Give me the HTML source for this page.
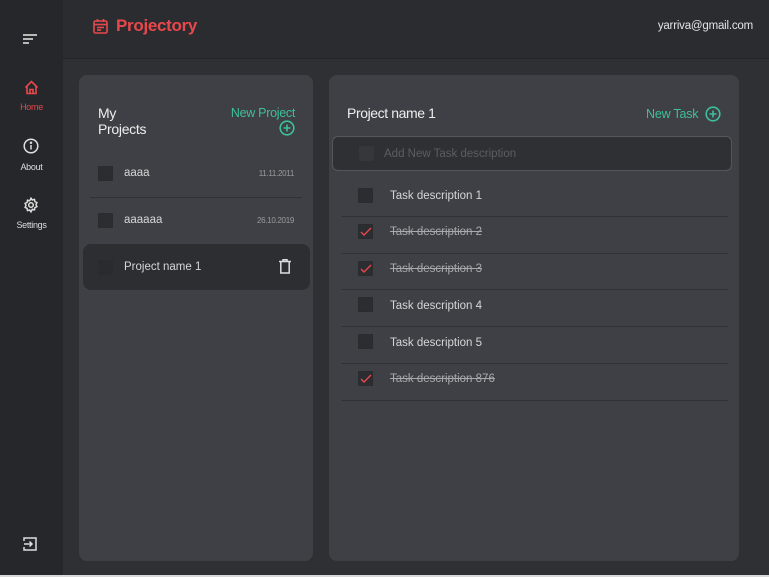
<!DOCTYPE html>
<html><head><style>
*{box-sizing:border-box;margin:0;padding:0}
body{width:769px;height:577px;background:#2f3034;font-family:"Liberation Sans",sans-serif;position:relative;overflow:hidden;color:#e4e4e6}
.side{position:absolute;left:0;top:0;width:63px;height:575px;background:#26272b}
.hdr{position:absolute;left:63px;top:0;right:0;height:59px;background:#2b2c30;border-bottom:1px solid #242529}
.card{position:absolute;background:#3f4045;border-radius:8px}
.nav{position:absolute;width:63px;text-align:center;font-size:9px;color:#ddd;letter-spacing:-.3px}
.cb{position:absolute;width:15px;height:15px;background:#2c2d31;border:1px solid #2a2b2e;border-radius:1px}
.t{position:absolute;font-size:11.5px;color:#d6d6d8}
.s{text-decoration:line-through;color:#a9a9ad}
.line{position:absolute;height:1px;background:#313236}
</style></head><body>
<div class="side"></div>
<div style="position:absolute;left:0;top:575px;width:769px;height:2px;background:#d8d8d8"></div>
<svg style="position:absolute;left:23px;top:34px" width="15" height="11"><g stroke="#ddd" stroke-width="1.6"><line x1="0" y1="1" x2="14" y2="1"/><line x1="0" y1="5" x2="10" y2="5"/><line x1="0" y1="9" x2="6" y2="9"/></g></svg>
<svg style="position:absolute;left:24px;top:80px" width="15" height="15" fill="none" stroke="#e8484c" stroke-width="1.6"><path d="M1.5 7.5L7.5 1.5L13.5 7.5M3 6v7.5h9V6M6 13.5V9.5h3v4"/></svg>
<div class="nav" style="top:102px;color:#e0484c">Home</div>
<svg style="position:absolute;left:23px;top:138px" width="16" height="16" fill="none" stroke="#ddd" stroke-width="1.5"><circle cx="8" cy="8" r="6.8"/><line x1="8" y1="7" x2="8" y2="11.5"/><circle cx="8" cy="4.8" r=".5" fill="#ddd"/></svg>
<div class="nav" style="top:162px">About</div>
<svg style="position:absolute;left:23px;top:197px" width="16" height="16" fill="none" stroke="#ddd" stroke-width="1.5"><circle cx="8" cy="8" r="2.3"/><path d="M8 1.2l1.3 1.8 2.2-.6.4 2.2 2 1-.9 2 .9 2-2 1-.4 2.2-2.2-.6L8 14.8l-1.3-1.8-2.2.6-.4-2.2-2-1 .9-2-.9-2 2-1 .4-2.2 2.2.6z"/></svg>
<div class="nav" style="top:220px">Settings</div>
<svg style="position:absolute;left:23px;top:537px" width="14" height="14" fill="none" stroke="#ddd" stroke-width="1.5"><path d="M1 4V1h12v12H1v-3M1 7h8M6.5 4.5L9 7 6.5 9.5"/></svg>
<div class="hdr"></div>
<svg style="position:absolute;left:93px;top:18px" width="15" height="16" fill="none" stroke="#e8484c" stroke-width="1.6"><rect x="1" y="3" width="13" height="12" rx="1.5"/><line x1="1" y1="6.5" x2="14" y2="6.5"/><line x1="4.5" y1="1" x2="4.5" y2="4"/><line x1="10.5" y1="1" x2="10.5" y2="4"/><line x1="4" y1="9.5" x2="11" y2="9.5"/><line x1="4" y1="12" x2="8" y2="12"/></svg>
<div style="position:absolute;left:116px;top:16px;font-size:17px;font-weight:bold;color:#e8484c;letter-spacing:-.3px">Projectory</div>
<div style="position:absolute;right:16px;top:20px;font-size:11.5px;color:#e4e4e6;letter-spacing:-.2px">yarriva@gmail.com</div>

<div class="card" style="left:79px;top:75px;width:234px;height:486px"></div>
<div style="position:absolute;left:98px;top:105px;font-size:14px;line-height:16px;color:#eee;letter-spacing:-.3px">My<br>Projects</div>
<div style="position:absolute;left:200px;top:106px;width:95px;text-align:right;font-size:12.5px;color:#3dbf9c;letter-spacing:-.3px">New Project</div>
<svg style="position:absolute;left:279px;top:120px" width="16" height="16" fill="none" stroke="#3dbf9c" stroke-width="1.6"><circle cx="8" cy="8" r="6.8"/><path d="M8 4.5v7M4.5 8h7"/></svg>
<div class="cb" style="left:98px;top:166px"></div><div class="t" style="left:124px;top:167px">aaaa</div><div style="position:absolute;right:475px;top:169px;font-size:8px;color:#9a9a9e;letter-spacing:-.3px">11.11.2011</div>
<div class="line" style="left:90px;top:197px;width:212px"></div>
<div class="cb" style="left:98px;top:213px"></div><div class="t" style="left:124px;top:214px">aaaaaa</div><div style="position:absolute;right:475px;top:216px;font-size:8px;color:#9a9a9e;letter-spacing:-.3px">26.10.2019</div>
<div style="position:absolute;left:83px;top:244px;width:227px;height:46px;background:#2d2e32;border-radius:8px"></div>
<div class="cb" style="left:98px;top:260px;background:#2a2b2e"></div><div class="t" style="left:124px;top:261px">Project name 1</div>
<svg style="position:absolute;left:279px;top:259px" width="12" height="15" fill="none" stroke="#ddd" stroke-width="1.5"><path d="M0 2.5h12M4 2.5V.8h4v1.7M1.8 2.5v11.5h8.4V2.5"/></svg>

<div class="card" style="left:329px;top:75px;width:410px;height:486px"></div>
<div style="position:absolute;left:347px;top:105px;font-size:14px;color:#eee;letter-spacing:-.4px">Project name 1</div>
<div style="position:absolute;left:646px;top:107px;font-size:12.5px;color:#3dbf9c;letter-spacing:-.2px">New Task</div>
<svg style="position:absolute;left:705px;top:106px" width="16" height="16" fill="none" stroke="#3dbf9c" stroke-width="1.6"><circle cx="8" cy="8" r="6.8"/><path d="M8 4.5v7M4.5 8h7"/></svg>
<div style="position:absolute;left:332px;top:136px;width:400px;height:35px;background:#2f3034;border:1px solid #55565b;border-radius:6px"></div>
<div class="cb" style="left:359px;top:146px;background:#36373b;border-color:#36373b"></div>
<div class="t" style="left:384px;top:148px;color:#5c5d62">Add New Task description</div>

<div class="cb" style="left:358px;top:188px"></div><div class="t" style="left:390px;top:190px">Task description 1</div>
<div class="line" style="left:341px;top:216px;width:387px"></div>
<div class="cb" style="left:358px;top:224px"></div><svg style="position:absolute;left:360px;top:227px" width="12" height="10" fill="none" stroke="#e8484c" stroke-width="1.4"><path d="M1 5l3 3 7-7"/></svg><div class="t s" style="left:390px;top:226px">Task description 2</div>
<div class="line" style="left:341px;top:253px;width:387px"></div>
<div class="cb" style="left:358px;top:261px"></div><svg style="position:absolute;left:360px;top:264px" width="12" height="10" fill="none" stroke="#e8484c" stroke-width="1.4"><path d="M1 5l3 3 7-7"/></svg><div class="t s" style="left:390px;top:263px">Task description 3</div>
<div class="line" style="left:341px;top:289px;width:387px"></div>
<div class="cb" style="left:358px;top:297px"></div><div class="t" style="left:390px;top:300px">Task description 4</div>
<div class="line" style="left:341px;top:326px;width:387px"></div>
<div class="cb" style="left:358px;top:334px"></div><div class="t" style="left:390px;top:337px">Task description 5</div>
<div class="line" style="left:341px;top:363px;width:387px"></div>
<div class="cb" style="left:358px;top:371px"></div><svg style="position:absolute;left:360px;top:374px" width="12" height="10" fill="none" stroke="#e8484c" stroke-width="1.4"><path d="M1 5l3 3 7-7"/></svg><div class="t s" style="left:390px;top:373px">Task description 876</div>
<div class="line" style="left:341px;top:400px;width:387px"></div>
</body></html>
